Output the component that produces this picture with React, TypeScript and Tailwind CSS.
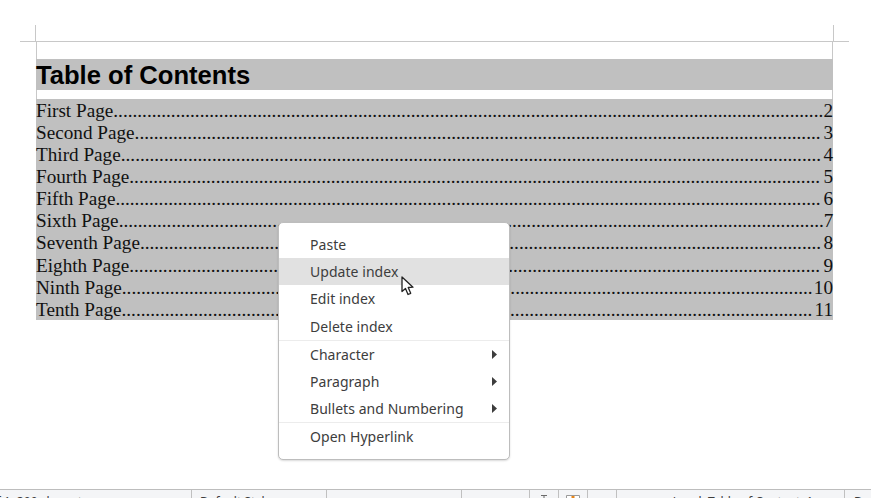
const rows: [string, string, number][] = [
  ["First Page", "2", 148],
  ["Second Page", "3", 143],
  ["Third Page", "4", 146],
  ["Fourth Page", "5", 144],
  ["Fifth Page", "6", 147],
  ["Sixth Page", "7", 147],
  ["Seventh Page", "8", 142],
  ["Eighth Page", "9", 144],
  ["Ninth Page", "10", 144],
  ["Tenth Page", "11", 144],
];

function Item({ label, sub, active }: { label: string; sub?: boolean; active?: boolean }) {
  return (
    <div className={`flex h-[27.2px] items-center justify-between pl-[31px] pr-[12px] ${active ? "bg-[#e1e1e1]" : ""}`}>
      <span>{label}</span>
      {sub && (
        <svg width="5" height="9" viewBox="0 0 5 9" className="block">
          <path d="M0 0 L5 4.5 L0 9 Z" fill="#3d3d3d" />
        </svg>
      )}
    </div>
  );
}

export default function App() {
  return (
    <div className="relative h-[498px] w-[871px] overflow-hidden bg-white">
      {/* crop marks of the page */}
      <div className="absolute left-[20px] top-[41px] h-px w-[829px] bg-[#c8c8c8]" />
      <div className="absolute left-[35px] top-[25px] h-[16px] w-px bg-[#c8c8c8]" />
      <div className="absolute left-[36px] top-[41px] h-[58px] w-px bg-[#c8c8c8]" />
      <div className="absolute left-[833px] top-[25px] h-[16px] w-px bg-[#c8c8c8]" />
      <div className="absolute left-[832px] top-[41px] h-[58px] w-px bg-[#c8c8c8]" />

      <div className="relative ml-[36px] w-[797px] pt-[59px]">
        <div className="flex h-[31px] items-center bg-[#c0c0c0] pt-[2px] font-['Liberation_Sans',sans-serif] text-[25.6px] font-bold leading-none text-black">
          Table of Contents
        </div>
        <div className="mt-[9px] h-[221px] bg-[#c0c0c0] pt-px font-['Liberation_Serif',serif] text-[19.2px] leading-[22.085px] text-[#111111]">
          {rows.map(([t, n, c]) => (
            <div key={t} className="flex whitespace-nowrap">
              <span className="shrink-0">{t}</span>
              <span className="flex-1">{".".repeat(c)}</span>
              <span className="shrink-0">{n}</span>
            </div>
          ))}
        </div>
      </div>

      {/* context menu */}
      <div className="absolute left-[278px] top-[222px] w-[232px] rounded-[5px] border border-[#bdbdbd] bg-white py-[8px] font-['Noto_Sans',sans-serif] text-[14px] tracking-[0.05px] text-[#3d3d3d] shadow-[0_1px_2px_rgba(0,0,0,0.15)]">
        <Item label="Paste" />
        <Item label="Update index" active />
        <Item label="Edit index" />
        <Item label="Delete index" />
        <div className="h-px bg-[#ececec]" />
        <Item label="Character" sub />
        <Item label="Paragraph" sub />
        <Item label="Bullets and Numbering" sub />
        <div className="h-px bg-[#ececec]" />
        <Item label="Open Hyperlink" />
      </div>

      {/* mouse pointer */}
      <svg width="14" height="20" viewBox="0 0 14 20" className="absolute left-[401px] top-[276px]">
        <path d="M1 1 L1 15.5 L4.5 12.5 L7 18.5 L9.7 17.3 L7.2 11.5 L12 11.2 Z" fill="#ffffff" stroke="#222222" strokeWidth="1.3" strokeLinejoin="round" />
      </svg>

      {/* status bar */}
      <div className="absolute bottom-0 left-0 flex h-[9px] w-full items-start overflow-hidden border-t border-[#bdbdbd] bg-[#f4f5f7] font-['Noto_Sans',sans-serif] text-[12px] leading-[16px] text-[#3d3d3d]">
        <div className="w-[192px] shrink-0 overflow-hidden border-r border-[#c0c0c0] pt-[4px] whitespace-nowrap">
          <span className="-ml-[52px] block">Page 1 of 1, 300 characters</span>
        </div>
        <div className="w-[135px] shrink-0 border-r border-[#c0c0c0] pt-[4px] pl-[8px]">Default Style</div>
        <div className="h-full w-[135px] shrink-0 border-r border-[#c0c0c0]" />
        <div className="h-full w-[68px] shrink-0 border-r border-[#c0c0c0]" />
        <div className="flex h-full w-[29px] shrink-0 justify-center border-r border-[#c0c0c0] pt-[5px]">
          <svg width="6" height="4" viewBox="0 0 6 4" className="block">
            <path d="M0 .5 H6 M3 .5 V4" stroke="#6b6b6b" strokeWidth="1" fill="none" />
          </svg>
        </div>
        <div className="flex h-full w-[29px] shrink-0 justify-center border-r border-[#c0c0c0] pt-[5px]">
          <svg width="14" height="4" viewBox="0 0 14 4" className="block">
            <path d="M.5 4 V.5 H13.5 V4" stroke="#9a9a9a" strokeWidth="1" fill="#ffffff" />
            <rect x="5.5" y="1" width="3" height="3" fill="#e8861a" />
          </svg>
        </div>
        <div className="h-full w-[29px] shrink-0 border-r border-[#c0c0c0]" />
        <div className="h-full w-[228px] shrink-0 border-r border-[#c0c0c0] pt-[4px] pr-[31px] text-right whitespace-nowrap">Level: Table of Contents1</div>
        <div className="pt-[4px] pl-[9px]">D</div>
      </div>
    </div>
  );
}
